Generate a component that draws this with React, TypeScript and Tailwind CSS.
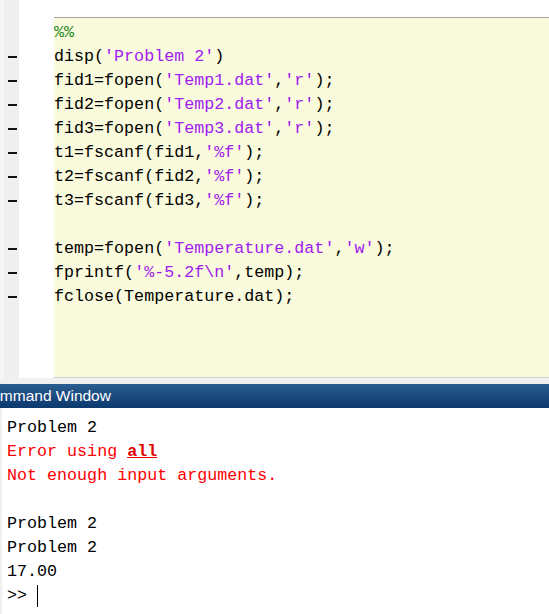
import React from "react";

const S = ({ children }: { children: React.ReactNode }) => (
  <span className="text-[#a020f0]">{children}</span>
);

const codeLines: { dash: boolean; content: React.ReactNode }[] = [
  { dash: false, content: <span className="text-[#228b22]">%%</span> },
  { dash: true, content: <>disp(<S>'Problem 2'</S>)</> },
  { dash: true, content: <>fid1=fopen(<S>'Temp1.dat'</S>,<S>'r'</S>);</> },
  { dash: true, content: <>fid2=fopen(<S>'Temp2.dat'</S>,<S>'r'</S>);</> },
  { dash: true, content: <>fid3=fopen(<S>'Temp3.dat'</S>,<S>'r'</S>);</> },
  { dash: true, content: <>t1=fscanf(fid1,<S>'%f'</S>);</> },
  { dash: true, content: <>t2=fscanf(fid2,<S>'%f'</S>);</> },
  { dash: true, content: <>t3=fscanf(fid3,<S>'%f'</S>);</> },
  { dash: false, content: <>&nbsp;</> },
  { dash: true, content: <>temp=fopen(<S>'Temperature.dat'</S>,<S>'w'</S>);</> },
  { dash: true, content: <>fprintf(<S>'%-5.2f\n'</S>,temp);</> },
  { dash: true, content: <>fclose(Temperature.dat);</> },
];

const mono = "font-['Liberation_Mono','Courier_New',monospace] text-[16.7px] leading-[24px] whitespace-pre";

export default function App() {
  return (
    <div className="w-[549px] h-[614px] overflow-hidden bg-white flex flex-col">
      {/* Editor */}
      <div className="h-[378px] flex flex-row shrink-0">
        <div className="w-[19px] bg-[#efefef] border-l-[4px] border-[#f6f6f6] pt-[18px] flex flex-col">
          <div className="pt-[3px]">
            {codeLines.map((l, i) => (
              <div key={i} className="h-[24px] flex items-center">
                {l.dash && <div className="ml-[4px] w-[9px] h-[1.5px] bg-[#111]" />}
              </div>
            ))}
          </div>
        </div>
        <div className="w-[35px] bg-white" />
        <div className="flex-1 flex flex-col bg-white">
          <div className="h-[17px]" />
          <div className="flex-1 bg-[#fafadc] border-t border-[#a3a3a3] border-b border-b-[#cfcfcf] pt-[3px]">
            <div className={`${mono} text-black`}>
              {codeLines.map((l, i) => (
                <div key={i} className="h-[24px]">{l.content}</div>
              ))}
            </div>
          </div>
        </div>
      </div>
      <div className="h-[6px] bg-[#f0f0f0] shrink-0" />
      {/* Command window title */}
      <div className="h-[24px] shrink-0 bg-gradient-to-b from-[#2a5d91] to-[#0d396d] flex items-center overflow-hidden">
        <span className="ml-[-20px] text-white text-[15.5px] font-['Liberation_Sans',Arial,sans-serif] whitespace-nowrap leading-none">
          Command Window
        </span>
      </div>
      {/* Command window content */}
      <div className="flex-1 bg-white border-l-2 border-[#f0f0f0] pt-[8px] pl-[5px]">
        <div className={`${mono} text-black`}>
          <div className="h-[24px]">Problem 2</div>
          <div className="h-[24px] text-[#ff0000]">
            Error using <span className="font-bold underline text-[#e00000] decoration-[#e00000]">all</span>
          </div>
          <div className="h-[24px] text-[#ff0000]">Not enough input arguments.</div>
          <div className="h-[24px]">&nbsp;</div>
          <div className="h-[24px]">Problem 2</div>
          <div className="h-[24px]">Problem 2</div>
          <div className="h-[24px]">17.00</div>
          <div className="h-[24px] flex items-center">
            <span>&gt;&gt; </span>
            <span className="inline-block w-[1px] h-[22px] bg-black" />
          </div>
        </div>
      </div>
    </div>
  );
}
